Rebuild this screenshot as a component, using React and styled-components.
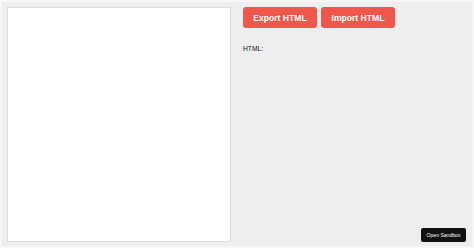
import React from "react";
import styled, { createGlobalStyle } from "styled-components";

const Global = createGlobalStyle`
  html, body { margin: 0; padding: 0; background: #f7f7f7; }
  body { font-family: "Liberation Sans", Arial, sans-serif; }
  * { box-sizing: border-box; }
`;

const Frame = styled.div`
  margin: 2px;
  height: 244px;
  background: #eeeeee;
  padding: 5px;
  display: flex;
  gap: 12px;
`;

const Canvas = styled.div`
  width: 224px;
  height: 235px;
  background: #ffffff;
  border: 1px solid #dcdcdc;
  flex-shrink: 0;
`;

const Side = styled.div`
  flex: 1;
  display: flex;
  flex-direction: column;
`;

const Toolbar = styled.div`
  display: flex;
  gap: 4px;
`;

const Button = styled.button`
  width: ${(p) => p.$w}px;
  height: 21px;
  border: none;
  border-radius: 3px;
  background: #f0574a;
  color: #ffffff;
  font-family: "Liberation Sans", Arial, sans-serif;
  font-weight: bold;
  font-size: 8.6px;
  padding: 0;
  cursor: pointer;
`;

const Label = styled.div`
  margin-top: 17px;
  font-size: 6.7px;
  color: #111;
`;

const Sandbox = styled.button`
  position: fixed;
  right: 8px;
  bottom: 6px;
  width: 45px;
  height: 14px;
  border: none;
  border-radius: 2px;
  background: #111111;
  color: #ffffff;
  font-family: "Liberation Sans", Arial, sans-serif;
  font-size: 5.1px;
  padding: 0;
`;

export default function App() {
  return (
    <>
      <Global />
      <Frame>
        <Canvas />
        <Side>
          <Toolbar>
            <Button $w={74}>Export HTML</Button>
            <Button $w={74}>Import HTML</Button>
          </Toolbar>
          <Label>HTML:</Label>
        </Side>
      </Frame>
      <Sandbox>Open Sandbox</Sandbox>
    </>
  );
}
